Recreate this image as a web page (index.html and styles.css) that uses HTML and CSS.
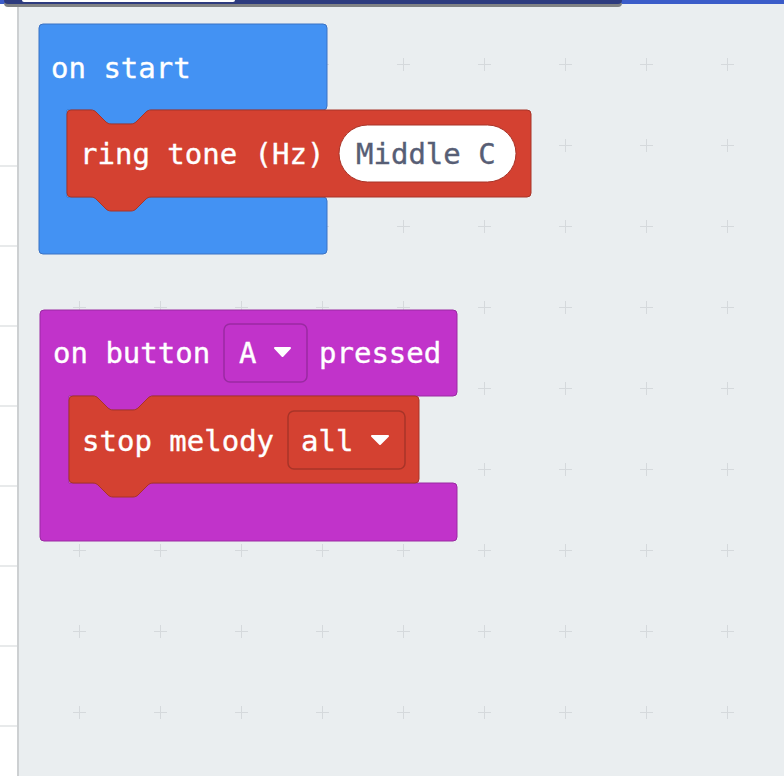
FILE: index.html
```html
<!DOCTYPE html>
<html lang="en">
<head>
    <meta charset="UTF-8">
    <meta name="viewport" content="width=device-width, initial-scale=1.0">
    <title>Blocks</title>
    <link rel="stylesheet" href="styles.css">
</head>
<body>
    <div class="header-line"></div>
    <div class="dock"><span class="dock-pill"></span></div>

    <div class="editor">
        <aside class="toolbox"></aside>

        <main class="workspace">
            <svg class="canvas" viewBox="18 0 766 776" width="766" height="776">
                <defs>
                    <pattern id="grid" x="38" y="24" width="81" height="81" patternUnits="userSpaceOnUse">
                        <path class="grid-mark" d="M34 40.5h13M40.5 34v13"/>
                    </pattern>
                </defs>
                <rect x="18" y="0" width="766" height="776" fill="url(#grid)"/>

                <!-- on start -->
                <g>
                    <path class="blk blk-basic" d="M38 28a4 4 0 0 1 4-4H322a4 4 0 0 1 4 4V106a4 4 0 0 1-4 4H150c-2 0-4 1-5 2l-10 10c-1 1-3 2-5 2h-20c-2 0-4-1-5-2l-10-10c-1-1-3-2-5-2H66V197H322a4 4 0 0 1 4 4V250a4 4 0 0 1-4 4H42a4 4 0 0 1-4-4Z"/>
                    <text class="label" x="50" y="78">on start</text>

                    <path class="blk blk-music" d="M66 114a4 4 0 0 1 4-4H90c2 0 4 1 5 2l10 10c1 1 3 2 5 2h20c2 0 4-1 5-2l10-10c1-1 3-2 5-2H526a4 4 0 0 1 4 4V193a4 4 0 0 1-4 4H150c-2 0-4 1-5 2l-10 10c-1 1-3 2-5 2h-20c-2 0-4-1-5-2l-10-10c-1-1-3-2-5-2H70a4 4 0 0 1-4-4Z"/>
                    <text class="label" x="79" y="164">ring tone (Hz)</text>
                    <rect class="pill" x="338" y="125" width="177" height="57" rx="28.5"/>
                    <text class="label value" x="355" y="164">Middle C</text>
                </g>

                <!-- on button A pressed -->
                <g>
                    <path class="blk blk-input" d="M39 314a4 4 0 0 1 4-4H452a4 4 0 0 1 4 4V392a4 4 0 0 1-4 4H152c-2 0-4 1-5 2l-10 10c-1 1-3 2-5 2h-20c-2 0-4-1-5-2l-10-10c-1-1-3-2-5-2H68V483H452a4 4 0 0 1 4 4V537a4 4 0 0 1-4 4H43a4 4 0 0 1-4-4Z"/>
                    <text class="label" x="52" y="363">on button</text>
                    <rect class="dropdown dropdown-input" x="223" y="324" width="83" height="58" rx="6"/>
                    <text class="label" x="238" y="363">A</text>
                    <path class="arrow" d="M274 348H289L281.5 356Z"/>
                    <text class="label" x="318" y="363">pressed</text>

                    <path class="blk blk-music" d="M68 400a4 4 0 0 1 4-4H92c2 0 4 1 5 2l10 10c1 1 3 2 5 2h20c2 0 4-1 5-2l10-10c1-1 3-2 5-2H414a4 4 0 0 1 4 4V479a4 4 0 0 1-4 4H152c-2 0-4 1-5 2l-10 10c-1 1-3 2-5 2h-20c-2 0-4-1-5-2l-10-10c-1-1-3-2-5-2H72a4 4 0 0 1-4-4Z"/>
                    <text class="label" x="81" y="451">stop melody</text>
                    <rect class="dropdown dropdown-music" x="287" y="411" width="117" height="58" rx="6"/>
                    <text class="label" x="300" y="451">all</text>
                    <path class="arrow" d="M371 436H387L379 444Z"/>
                </g>
            </svg>
        </main>
    </div>
</body>
</html>
```

FILE: styles.css
```css
body { margin: 0; overflow: hidden; background: #eaeef0; font-family: "DejaVu Sans Mono", monospace; }

.header-line { position: absolute; top: 0; left: 0; right: 0; height: 4px; background: #3b5cc9; z-index: 2; }
.dock { position: absolute; top: 0; left: 4px; width: 618px; height: 4px; background: #2d3b7e; border-radius: 0 0 14px 14px; box-shadow: 0 3px 0 #808284; z-index: 3; }
.dock-pill { position: absolute; top: 0; left: 18px; width: 213px; height: 2px; background: #fff; border-radius: 0 0 8px 8px; }

.editor { display: flex; height: 776px; }
.toolbox {
    width: 17px;
    flex: none;
    background:
        linear-gradient(#fff, #fff) 0 0 / 100% 160px no-repeat,
        repeating-linear-gradient(#fff 0 5px, #e8eaeb 5px 7px, #fff 7px 80px) 0 0 / 100% 80px;
    border-right: 2px solid #cdd0d2;
    box-shadow: 1px 0 2px rgba(0, 0, 0, 0.08);
}
.workspace { flex: 1; background: #eaeef0; }
.canvas { display: block; }

.grid-mark { stroke: #d5d9dc; stroke-width: 1; fill: none; }

.blk { stroke-width: 1; }
.blk-basic { fill: #4392f3; stroke: #3a72c4; }
.blk-music { fill: #d44131; stroke: #a83428; }
.blk-input { fill: #c133ca; stroke: #9a2aa2; }

/* slight stroke thickens the mono glyphs a touch */
.label { fill: #fff; stroke: #fff; stroke-width: 0.35px; font-family: "DejaVu Sans Mono", monospace; font-size: 29px; }
.value { fill: #575e75; stroke: #575e75; }

.pill { fill: #fff; stroke: #a83428; stroke-width: 1; }
.dropdown { stroke-width: 1.5; }
.dropdown-input { fill: #c133ca; stroke: #9a2aa2; }
.dropdown-music { fill: #d44131; stroke: #a83428; }
.arrow { fill: #fff; stroke: #fff; stroke-width: 2; stroke-linejoin: round; }
```
